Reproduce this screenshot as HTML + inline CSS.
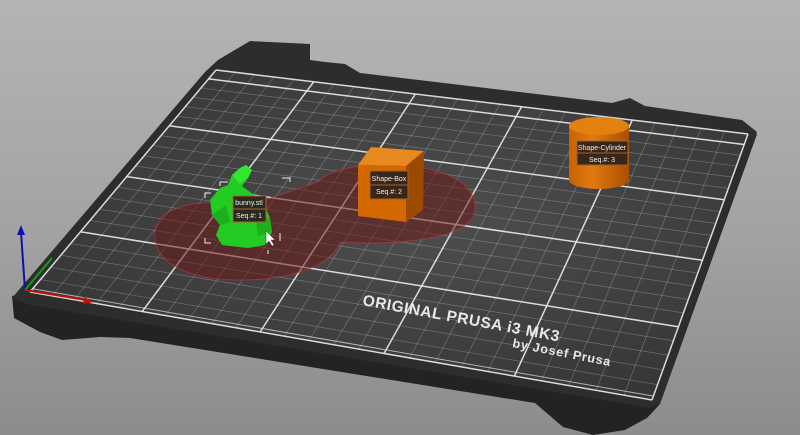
<!DOCTYPE html>
<html><head><meta charset="utf-8"><style>
html,body{margin:0;padding:0;width:800px;height:435px;overflow:hidden;background:#a8a8a8}
svg{display:block}
</style></head><body>
<svg id="s" width="800" height="435" viewBox="0 0 800 435" xmlns="http://www.w3.org/2000/svg">
<defs>
<linearGradient id="bg" x1="0" y1="0" x2="0" y2="1">
<stop offset="0" stop-color="#b4b4b4"/><stop offset="0.5" stop-color="#a4a4a4"/><stop offset="1" stop-color="#8c8c8c"/></linearGradient>
<radialGradient id="bed" cx="0.55" cy="0.45" r="0.6">
<stop offset="0" stop-color="#4e4e4e"/><stop offset="1" stop-color="#363636"/></radialGradient>
<linearGradient id="cyl" x1="0" y1="0" x2="1" y2="0">
<stop offset="0" stop-color="#c86200"/><stop offset="0.4" stop-color="#e07a10"/><stop offset="1" stop-color="#a84f00"/></linearGradient>
</defs>
<rect width="800" height="435" fill="url(#bg)"/>
<!-- plate thickness / base -->
<path d="M12,296 L14,318 L40,332 L62,340 L100,337 L130,338 L535,403 L563,427 L593,435 L625,430 L647,418 L660,404 L757,134 L740,130 Z" fill="#232323"/>
<!-- plate top -->
<path d="M12,298 L205,72 L218,60 L250,41 L310,44 L310,60 L325,62 L345,64 L360,73 L612,103 L630,98 L645,106 L742,120 L757,132 L660,403 L650,408 L30,305 Z" fill="#2d2d2d"/>
<path d="M30,292 L216,70 L748,134 L652,400 Z" fill="url(#bed)"/>
<g id="grid" stroke="#e4e4e4" fill="none"></g>
<!-- exclusion zones -->
<path d="M155,232 C158,205 200,198 250,205 L318,182 C328,170 360,163 400,165 C470,170 482,200 472,218 C460,238 400,246 340,242 C332,266 290,280 240,280 C180,280 152,258 155,232 Z" fill="rgba(110,20,20,0.5)" stroke="rgba(190,60,60,0.6)" stroke-width="1"/>
<!-- box -->
<path d="M358,165 L371,147 L424,151 L406,166 Z" fill="#e88a20"/>
<path d="M406,166 L424,151 L423,210 L406,222 Z" fill="#9c4a00"/>
<path d="M358,165 L406,166 L406,222 L358,216 Z" fill="#d46800"/>
<rect x="370" y="171" width="38" height="28" fill="#3a2618" stroke="#a0602a" stroke-width="1"/>
<line x1="370" y1="185" x2="408" y2="185" stroke="#a0602a"/>
<text x="389" y="181" font-family="Liberation Sans,sans-serif" font-size="7" fill="#eee" text-anchor="middle">Shape-Box</text>
<text x="389" y="194" font-family="Liberation Sans,sans-serif" font-size="7" fill="#eee" text-anchor="middle">Seq.#: 2</text>
<!-- cylinder -->
<path d="M569,126 L569,180 A30,9 0 0 0 629,180 L629,126 Z" fill="url(#cyl)"/>
<ellipse cx="599" cy="126" rx="30" ry="9" fill="#e38010"/>
<rect x="577" y="141" width="51" height="24" fill="#3a2618" stroke="#a0602a"/>
<line x1="577" y1="153" x2="628" y2="153" stroke="#a0602a"/>
<text x="602" y="150" font-family="Liberation Sans,sans-serif" font-size="7" fill="#eee" text-anchor="middle">Shape-Cylinder</text>
<text x="602" y="162" font-family="Liberation Sans,sans-serif" font-size="7" fill="#eee" text-anchor="middle">Seq.#: 3</text>
<!-- bunny -->
<path d="M222,245 L216,235 L220,225 L212,215 L210,200 L220,188 L228,185 L232,175 L240,168 L246,165 L252,170 L248,178 L242,186 L250,192 L262,200 L270,218 L272,232 L265,245 L248,248 Z" fill="#22cc22"/>
<path d="M232,175 L240,168 L246,165 L252,170 L248,178 L240,184 Z" fill="#2ee82e"/>
<path d="M212,215 L220,225 L230,222 L226,205 Z M255,215 L270,218 L272,232 L258,236 Z" fill="#1cb01c"/>
<g stroke="#eee" stroke-width="1" fill="none">
<path d="M220,186 v-4 h8 M290,182 v-4 h-8 M205,198 v-5 h6 M205,238 v5 h6 M280,233 v8 M268,250 v4"/>
</g>
<rect x="233" y="196" width="33" height="26" fill="#2a2a1e" stroke="#b0602a"/>
<line x1="233" y1="209" x2="266" y2="209" stroke="#b0602a"/>
<text x="249" y="205" font-family="Liberation Sans,sans-serif" font-size="7" fill="#eee" text-anchor="middle">bunny.stl</text>
<text x="249" y="218" font-family="Liberation Sans,sans-serif" font-size="7" fill="#eee" text-anchor="middle">Seq.#: 1</text>
<path d="M266,231 L266,244 L269,241 L272,246 L274,245 L271,240 L275,240 Z" fill="#fff" stroke="#333" stroke-width="0.5"/>
<!-- text on bed -->
<text transform="translate(362,305) rotate(10.5)" font-family="Liberation Sans,sans-serif" font-size="15.5" font-weight="bold" fill="#e8e8e8" letter-spacing="0.6">ORIGINAL PRUSA i3 MK3</text>
<text transform="translate(512,347) rotate(11)" font-family="Liberation Sans,sans-serif" font-size="12.5" font-weight="bold" fill="#e8e8e8" letter-spacing="0.8">by Josef Prusa</text>
<!-- axes -->
<line x1="25" y1="290" x2="21" y2="232" stroke="#1010b0" stroke-width="2"/>
<path d="M21,225 L17,235 L25,235 Z" fill="#1010b0"/>
<line x1="25" y1="290" x2="52" y2="258" stroke="#10a010" stroke-width="2"/>
<line x1="25" y1="290" x2="86" y2="300" stroke="#c01010" stroke-width="2"/>
<path d="M94,302 L84,297 L83,304 Z" fill="#c01010"/>
</svg>
<script>
(function(){
var P=[[30,292],[652,400],[748,134],[216,70]];
var x0=P[0][0],y0=P[0][1],x1=P[1][0],y1=P[1][1],x2=P[2][0],y2=P[2][1],x3=P[3][0],y3=P[3][1];
var dx1=x1-x2,dx2=x3-x2,dy1=y1-y2,dy2=y3-y2,sx=x0-x1+x2-x3,sy=y0-y1+y2-y3;
var den=dx1*dy2-dx2*dy1;
var g=(sx*dy2-dx2*sy)/den,h=(dx1*sy-sx*dy1)/den;
var a=x1-x0+g*x1,b=x3-x0+h*x3,c=x0,d=y1-y0+g*y1,e=y3-y0+h*y3,f=y0;
function m(u,v){var w=g*u+h*v+1;return [(a*u+b*v+c)/w,(d*u+e*v+f)/w];}
var G=document.getElementById('grid'),s='';
function ln(p,q,wd,op){s+='<line x1="'+p[0].toFixed(1)+'" y1="'+p[1].toFixed(1)+'" x2="'+q[0].toFixed(1)+'" y2="'+q[1].toFixed(1)+'" stroke-width="'+wd+'" stroke-opacity="'+op+'"/>';}
for(var i=0;i<=25;i++){var u=i/25;var maj=(i%5==0);ln(m(u,0),m(u,1),maj?1.5:0.6,maj?0.95:0.35);}
for(var j=0;j<=21;j++){var v=j/21;var maj=(j%5==0)||j==21;ln(m(0,v),m(1,v),maj?1.5:0.6,maj?0.95:0.35);}
ln(m(0,0.012),m(1,0.012),1,0.7);
G.innerHTML=s;
})();
</script>
</body></html>
